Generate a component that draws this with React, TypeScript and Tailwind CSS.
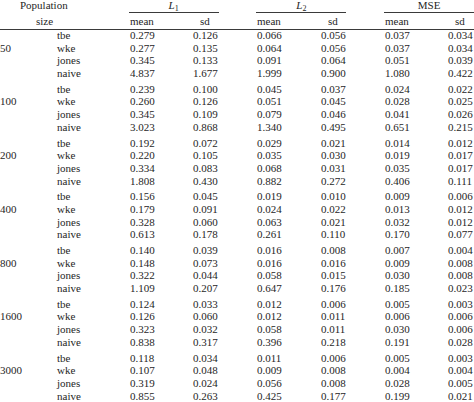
const groups = [
  {
    size: "50",
    rows: [
      ["tbe", "0.279", "0.126", "0.066", "0.056", "0.037", "0.034"],
      ["wke", "0.277", "0.135", "0.064", "0.056", "0.037", "0.034"],
      ["jones", "0.345", "0.133", "0.091", "0.064", "0.051", "0.039"],
      ["naive", "4.837", "1.677", "1.999", "0.900", "1.080", "0.422"],
    ],
  },
  {
    size: "100",
    rows: [
      ["tbe", "0.239", "0.100", "0.045", "0.037", "0.024", "0.022"],
      ["wke", "0.260", "0.126", "0.051", "0.045", "0.028", "0.025"],
      ["jones", "0.345", "0.109", "0.079", "0.046", "0.041", "0.026"],
      ["naive", "3.023", "0.868", "1.340", "0.495", "0.651", "0.215"],
    ],
  },
  {
    size: "200",
    rows: [
      ["tbe", "0.192", "0.072", "0.029", "0.021", "0.014", "0.012"],
      ["wke", "0.220", "0.105", "0.035", "0.030", "0.019", "0.017"],
      ["jones", "0.334", "0.083", "0.068", "0.031", "0.035", "0.017"],
      ["naive", "1.808", "0.430", "0.882", "0.272", "0.406", "0.111"],
    ],
  },
  {
    size: "400",
    rows: [
      ["tbe", "0.156", "0.045", "0.019", "0.010", "0.009", "0.006"],
      ["wke", "0.179", "0.091", "0.024", "0.022", "0.013", "0.012"],
      ["jones", "0.328", "0.060", "0.063", "0.021", "0.032", "0.012"],
      ["naive", "0.613", "0.178", "0.261", "0.110", "0.170", "0.077"],
    ],
  },
  {
    size: "800",
    rows: [
      ["tbe", "0.140", "0.039", "0.016", "0.008", "0.007", "0.004"],
      ["wke", "0.148", "0.073", "0.016", "0.016", "0.009", "0.008"],
      ["jones", "0.322", "0.044", "0.058", "0.015", "0.030", "0.008"],
      ["naive", "1.109", "0.207", "0.647", "0.176", "0.185", "0.023"],
    ],
  },
  {
    size: "1600",
    rows: [
      ["tbe", "0.124", "0.033", "0.012", "0.006", "0.005", "0.003"],
      ["wke", "0.126", "0.060", "0.012", "0.011", "0.006", "0.006"],
      ["jones", "0.323", "0.032", "0.058", "0.011", "0.030", "0.006"],
      ["naive", "0.838", "0.317", "0.396", "0.218", "0.191", "0.028"],
    ],
  },
  {
    size: "3000",
    rows: [
      ["tbe", "0.118", "0.034", "0.011", "0.006", "0.005", "0.003"],
      ["wke", "0.107", "0.048", "0.009", "0.008", "0.004", "0.004"],
      ["jones", "0.319", "0.024", "0.056", "0.008", "0.028", "0.005"],
      ["naive", "0.855", "0.263", "0.425", "0.177", "0.199", "0.021"],
    ],
  },
];

const cols = "grid grid-cols-[57px_73px_63px_64px_64px_64px_63px_1fr]";

function Metric({ n }: { n: string }) {
  return (
    <span>
      <span className="italic">L</span>
      <span className="relative top-[2px] text-[8px]">{n}</span>
    </span>
  );
}

export default function App() {
  return (
    <div className="w-[474px] h-[402px] overflow-hidden bg-white text-[#262626] font-['Liberation_Serif',serif] text-[11px] whitespace-nowrap">
      {/* group headers */}
      <div className="flex h-[13px] items-start leading-[11px]">
        <div className="w-[129px] pl-[20px]">Population</div>
        <div className="w-[90px] h-[13px] border-b border-[#3a3a3a] text-center">
          <Metric n="1" />
        </div>
        <div className="w-[38px]" />
        <div className="w-[90px] h-[13px] border-b border-[#3a3a3a] text-center">
          <Metric n="2" />
        </div>
        <div className="w-[38px]" />
        <div className="w-[90px] h-[13px] border-b border-[#3a3a3a] text-center">MSE</div>
      </div>

      {/* column headers */}
      <div className={`${cols} h-[17px] items-end leading-[11px] border-b border-[#3a3a3a]`}>
        <div className="col-span-2 pl-[36px]">size</div>
        <div>mean</div>
        <div className="pl-[7px]">sd</div>
        <div>mean</div>
        <div className="pl-[7px]">sd</div>
        <div>mean</div>
        <div className="pl-[7px]">sd</div>
        <div />
      </div>

      <div className="-mt-[1px] flex flex-col gap-[3px]">
        {groups.map((g) => (
          <div key={g.size}>
            {g.rows.map((r, i) => (
              <div key={r[0]} className={`${cols} h-[12.7px] leading-[12.7px]`}>
                <div>{i === 1 ? g.size : ""}</div>
                {r.map((c, j) => (
                  <div key={j}>{c}</div>
                ))}
                <div />
              </div>
            ))}
          </div>
        ))}
      </div>
    </div>
  );
}
